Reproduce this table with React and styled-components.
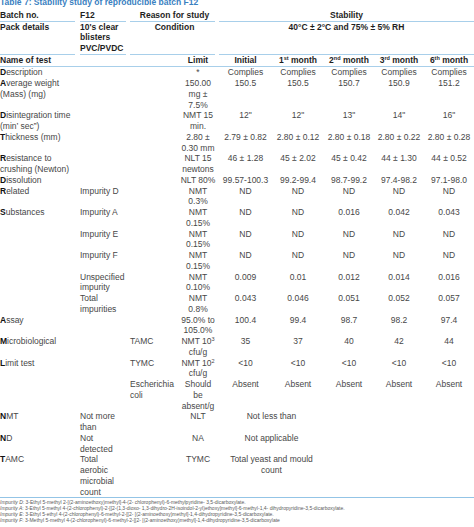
import React from 'react';
import styled, { createGlobalStyle } from 'styled-components';

const Global = createGlobalStyle`
  html, body { margin: 0; padding: 0; background: #ffffff; overflow: hidden; }
  body { font-family: "Liberation Sans", Arial, sans-serif; }
`;

const LINE = '#a8cfea';

const Page = styled.div`
  width: 474px;
  height: 527px;
  overflow: hidden;
  color: #474747;
  font-size: 8.5px;
  line-height: 10.75px;
`;

const Title = styled.div`
  margin-top: -2.7px;
  margin-bottom: 1.6px;
  color: #3a7fc1;
  font-weight: bold;
  white-space: nowrap;
`;

const Table = styled.table`
  width: 474px;
  border-collapse: collapse;
  border-spacing: 0;
  table-layout: fixed;
`;

const Col = styled.col`
  width: ${p => p.$w}px;
`;

const HeadCell = styled.th`
  padding: 0 0 1.3px 0;
  vertical-align: top;
  font-weight: bold;
  color: #1e1e1e;
  text-align: ${p => p.$align || 'left'};
  background-image: linear-gradient(${LINE}, ${LINE});
  background-repeat: no-repeat;
  background-position: left bottom;
  background-size: ${p => (p.$gap ? `calc(100% - ${p.$gap}px) 1px` : '100% 1px')};
  white-space: ${p => (p.$nowrap ? 'nowrap' : 'normal')};
  padding-right: ${p => p.$pr || 0}px;
`;

const Cell = styled.td`
  padding: 0 ${p => p.$pr || 0}px 0 ${p => p.$pl || 0}px;
  vertical-align: top;
  text-align: ${p => p.$align || 'left'};
  white-space: ${p => (p.$nowrap ? 'nowrap' : 'normal')};
`;

const NameCell = styled(Cell)`
  padding-right: 4px;
  &::first-letter {
    color: #111;
    font-weight: bold;
  }
`;

const Sup = styled.sup`
  font-size: 5.5px;
  line-height: 0;
  vertical-align: 3px;
`;

const Notes = styled.div`
  border-top: 1.5px solid #93c4e6;
  padding-top: 0.5px;
  font-size: 5px;
  line-height: 6px;
  color: #5a5a5a;
  white-space: nowrap;
`;

const NoteLabel = styled.i`
  font-style: italic;
`;

const headerMonths = [
  ['Initial', null],
  ['1', 'st'],
  ['2', 'nd'],
  ['3', 'rd'],
  ['6', 'th'],
];

const rows = [
  { a: 'Description', lim: '*', v: ['Complies', 'Complies', 'Complies', 'Complies', 'Complies'] },
  { a: 'Average weight (Mass) (mg)', lim: '150.00 mg ± 7.5%', v: ['150.5', '150.5', '150.7', '150.9', '151.2'] },
  { a: 'Disintegration time (min\u2019 sec\u201D)', lim: 'NMT 15 min.', v: ['12"', '12"', '13"', '14"', '16"'] },
  { a: 'Thickness (mm)', lim: '2.80 ± 0.30 mm', v: ['2.79 ± 0.82', '2.80 ± 0.12', '2.80 ± 0.18', '2.80 ± 0.22', '2.80 ± 0.28'] },
  { a: 'Resistance to crushing (Newton)', lim: 'NLT 15 newtons', v: ['46 ± 1.28', '45 ± 2.02', '45 ± 0.42', '44 ± 1.30', '44 ± 0.52'] },
  { a: 'Dissolution', lim: 'NLT 80%', v: ['99.57-100.3', '99.2-99.4', '98.7-99.2', '97.4-98.2', '97.1-98.0'] },
  { a: 'Related', b: 'Impurity D', lim: 'NMT 0.3%', v: ['ND', 'ND', 'ND', 'ND', 'ND'] },
  { a: 'Substances', b: 'Impurity A', lim: 'NMT 0.15%', v: ['ND', 'ND', '0.016', '0.042', '0.043'] },
  { b: 'Impurity E', lim: 'NMT 0.15%', v: ['ND', 'ND', 'ND', 'ND', 'ND'] },
  { b: 'Impurity F', lim: 'NMT 0.15%', v: ['ND', 'ND', 'ND', 'ND', 'ND'] },
  { b: 'Unspecified impurity', lim: 'NMT 0.10%', v: ['0.009', '0.01', '0.012', '0.014', '0.016'] },
  { b: 'Total impurities', lim: 'NMT 0.8%', v: ['0.043', '0.046', '0.051', '0.052', '0.057'] },
  { a: 'Assay', lim: '95.0% to 105.0%', v: ['100.4', '99.4', '98.7', '98.2', '97.4'] },
  { a: 'Microbiological', c: 'TAMC', lim: <>NMT 10<Sup>3</Sup> cfu/g</>, v: ['35', '37', '40', '42', '44'] },
  { a: 'Limit test', c: 'TYMC', lim: <>NMT 10<Sup>2</Sup> cfu/g</>, v: ['<10', '<10', '<10', '<10', '<10'] },
  { c: 'Escherichia coli', lim: 'Should be absent/g', v: ['Absent', 'Absent', 'Absent', 'Absent', 'Absent'] },
];

const abbreviations = [
  ['NMT', 'Not more than', 'NLT', 'Not less than'],
  ['ND', 'Not detected', 'NA', 'Not applicable'],
  ['TAMC', 'Total aerobic microbial count', 'TYMC', 'Total yeast and mould count'],
];

const notes = [
  ['Impurity D', ': 3-Ethyl 5-methyl 2-[(2-aminoethoxy)methyl]-4-(2- chlorophenyl)-6-methylpyridine- 3,5-dicarboxylate.'],
  ['Impurity A', ': 3-Ethyl 5-methyl 4-(2-chlorophenyl)-2-[[2-(1,3-dioxo- 1,3-dihydro-2H-isoindol-2-yl)ethoxy]methyl]-6-methyl-1,4- dihydropyridine-3,5-dicarboxylate.'],
  ['Impurity E', ': 3-Ethyl 5-ethyl 4-(2-chlorophenyl)-6-methyl-2-[[2- [(2-aminoethoxy)methyl]-1,4-dihydropyridine-3,5-dicarboxylate.'],
  ['Impurity F', ': 3-Methyl 5-methyl 4-(2-chlorophenyl)-6-methyl-2-[[2- [(2-aminoethoxy)methyl]-1,4-dihydropyridine-3,5-dicarboxylate'],
];

export default function App() {
  return (
    <Page>
      <Global />
      <Title>Table 7: Stability study of reproducible batch F12</Title>
      <Table>
        <colgroup>
          <Col $w={80} />
          <Col $w={50} />
          <Col $w={47} />
          <Col $w={42} />
          <Col $w={53} />
          <Col $w={52} />
          <Col $w={50} />
          <Col $w={50} />
          <Col $w={50} />
        </colgroup>
        <thead>
          <tr>
            <HeadCell $gap={5}>Batch no.</HeadCell>
            <HeadCell $gap={4}>F12</HeadCell>
            <HeadCell colSpan={2} $align="center" $gap={4}>Reason for study</HeadCell>
            <HeadCell colSpan={5} $align="center">Stability</HeadCell>
          </tr>
          <tr>
            <HeadCell $gap={5}>Pack details</HeadCell>
            <HeadCell $gap={4} $pr={2}>10's clear blisters PVC/PVDC</HeadCell>
            <HeadCell colSpan={2} $align="center" $gap={4}>Condition</HeadCell>
            <HeadCell colSpan={5} $align="center">40°C ± 2°C and 75% ± 5% RH</HeadCell>
          </tr>
          <tr>
            <HeadCell colSpan={3}>Name of test</HeadCell>
            <HeadCell $align="center">Limit</HeadCell>
            {headerMonths.map(([n, s]) => (
              <HeadCell key={n} $align="center" $nowrap>
                {n}
                {s && <Sup>{s}</Sup>}
                {s && ' month'}
              </HeadCell>
            ))}
          </tr>
        </thead>
        <tbody>
          {rows.map((r, i) => (
            <tr key={i}>
              <NameCell>{r.a || ''}</NameCell>
              <Cell $pr={4}>{r.b || ''}</Cell>
              <Cell $pr={2}>{r.c || ''}</Cell>
              <Cell $align="center" $pl={2.5} $pr={2.5}>{r.lim}</Cell>
              {r.v.map((v, j) => (
                <Cell key={j} $align="center" $nowrap>{v}</Cell>
              ))}
            </tr>
          ))}
          {abbreviations.map(([a, b, l, v]) => (
            <tr key={a}>
              <NameCell>{a}</NameCell>
              <Cell $pr={4}>{b}</Cell>
              <Cell />
              <Cell $align="center" $pl={2.5} $pr={2.5}>{l}</Cell>
              <Cell colSpan={2} $align="center" $pl={2} $pr={2}>{v}</Cell>
              <Cell />
              <Cell />
              <Cell />
            </tr>
          ))}
        </tbody>
      </Table>
      <Notes>
        {notes.map(([label, text]) => (
          <div key={label}>
            <NoteLabel>{label}</NoteLabel>
            {text}
          </div>
        ))}
      </Notes>
    </Page>
  );
}
